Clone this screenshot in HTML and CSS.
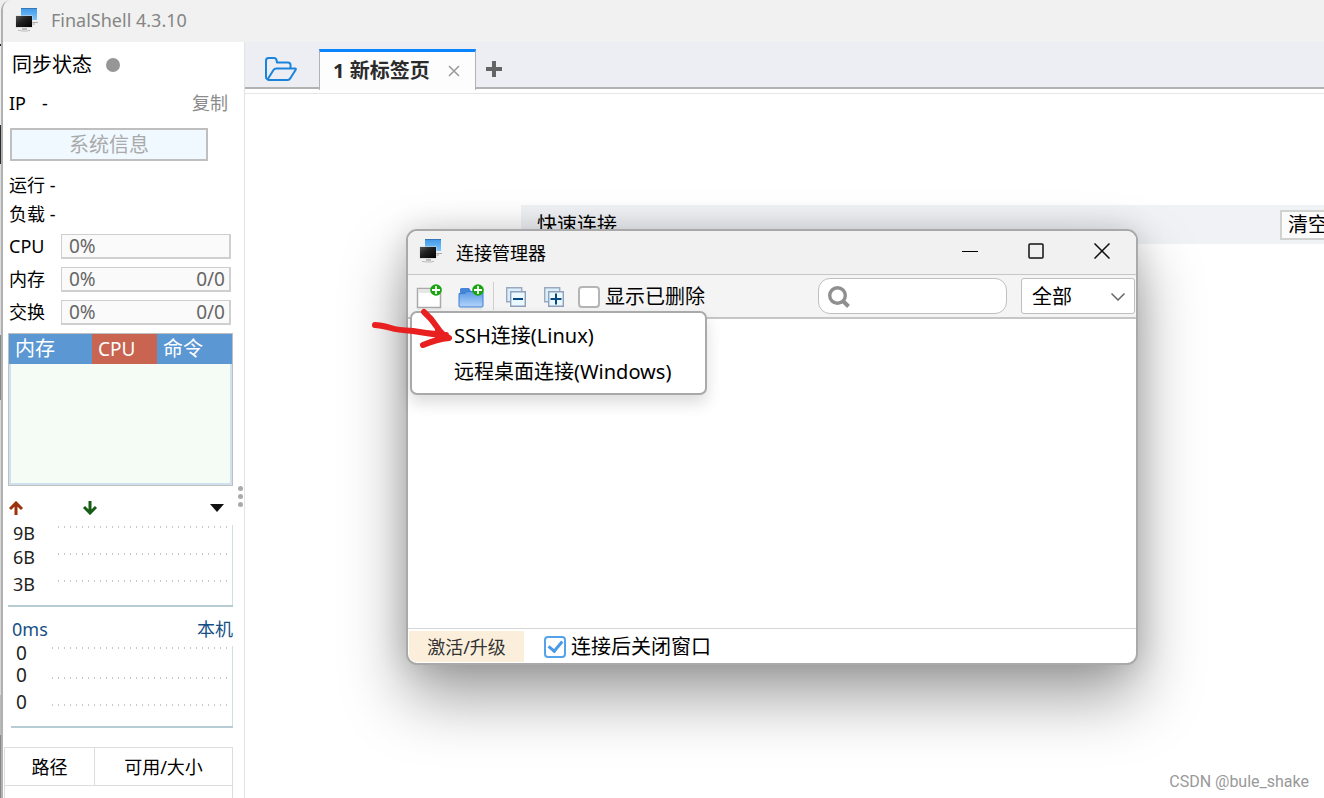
FILE: index.html
```html
<!DOCTYPE html>
<html lang="zh-CN">
<head>
<meta charset="utf-8">
<title>FinalShell 4.3.10</title>
<link rel="stylesheet" href="styles.css">
</head>
<body>
<svg class="defs" aria-hidden="true">
  <defs>
    <linearGradient id="blueScreen" x1="0" y1="0" x2="0" y2="1"><stop offset="0" stop-color="#3f97e6"/><stop offset="1" stop-color="#7cc6ff"/></linearGradient>
    <linearGradient id="darkScreen" x1="0" y1="0" x2="1" y2="1"><stop offset="0" stop-color="#555"/><stop offset=".4" stop-color="#222"/><stop offset="1" stop-color="#000"/></linearGradient>
    <linearGradient id="folderFill" x1="0" y1="0" x2="0" y2="1"><stop offset="0" stop-color="#5a9ae4"/><stop offset="1" stop-color="#b4d4fb"/></linearGradient>
    <symbol id="logo" viewBox="0 0 24 24">
      <path d="M6 0h16v12H6z" fill="url(#blueScreen)"/>
      <path d="M6 0h16v1H6z" fill="#3478b8"/>
      <path d="M17 14.500h6M17 16h3" stroke="#aaa"/>
      <path d="M.5 7.500h17v12.500H.5z" fill="#ddd"/>
      <path d="M1 8h16v11H1z" fill="url(#darkScreen)"/>
      <path d="M7 20h5v2H7zM3 22h3v1H3zM6 22.500h7v1H6zM13 22h2v1h-2z" fill="#bbb"/>
    </symbol>
    <symbol id="badge" viewBox="0 0 12 12">
      <circle cx="6" cy="6" r="5.800" fill="#18a510"/>
      <path d="M6 2v8M2 6h8" stroke="#fff" stroke-width="1.800"/>
    </symbol>
  </defs>
</svg>

<div class="desktop">
  <div class="app">
    <header class="app-title">
      <svg class="logo" aria-hidden="true"><use href="#logo"/></svg>
      <span>FinalShell 4.3.10</span>
    </header>

    <div class="app-body">
      <aside class="sidebar">
        <div class="sync">同步状态<span class="sync-dot"></span></div>
        <div class="ip"><span>IP</span><span class="ip-value">-</span><button class="copy" type="button">复制</button></div>
        <button class="sysinfo" type="button">系统信息</button>
        <div class="stat">运行 -</div>
        <div class="stat">负载 -</div>
        <div class="meters">
          <div class="meter"><span>CPU</span><div class="meter-box"><span>0%</span></div></div>
          <div class="meter"><span>内存</span><div class="meter-box"><span>0%</span><span>0/0</span></div></div>
          <div class="meter"><span>交换</span><div class="meter-box"><span>0%</span><span>0/0</span></div></div>
        </div>
        <div class="process">
          <table class="process-table">
            <thead><tr><th class="col-mem">内存</th><th class="col-cpu">CPU</th><th>命令</th></tr></thead>
          </table>
        </div>
        <div class="net-head">
          <svg class="net-icon" viewBox="0 0 14 14" aria-label="上传"><path d="M7 14V3M1 8l6-6 6 6" fill="none" stroke="#9b300b" stroke-width="3"/></svg>
          <svg class="net-icon net-down" viewBox="0 0 14 14" aria-label="下载"><path d="M7 0v11M1 6l6 6 6-6" fill="none" stroke="#165c16" stroke-width="3"/></svg>
          <svg class="net-menu" viewBox="0 0 14 8" aria-hidden="true"><path d="M0 0h14L7 8z" fill="#111"/></svg>
        </div>
        <div class="chart">
          <div class="labels"><span>9B</span><span>6B</span><span>3B</span></div>
          <div class="lines"><i></i><i></i><i></i></div>
        </div>
        <div class="ping-head"><span>0ms</span><span>本机</span></div>
        <div class="chart chart-ping">
          <div class="labels"><span>0</span><span>0</span><span>0</span></div>
          <div class="lines"><i></i><i></i><i></i></div>
        </div>
        <table class="disk">
          <thead><tr><th class="col-path">路径</th><th>可用/大小</th></tr></thead>
          <tbody><tr><td colspan="2"></td></tr></tbody>
        </table>
        <div class="grip"><i></i><i></i><i></i></div>
      </aside>

      <main class="main">
        <nav class="tabs">
          <button class="open" type="button" aria-label="打开">
            <svg viewBox="0 0 32 24" aria-hidden="true"><path d="M2.500 22.500Q1 22 1 20V3.500Q1 1 3.500 1H9q2 0 2.500 2l.5 2.500h11q2.500 0 2.500 2.500v3M2.500 22.500 8.500 13q1-1.500 3-1.500H30q1.500 0 .5 1.500l-5 8q-1 2-3 2H4q-1 0-1.500-.5z" fill="none" stroke="#1a83dc" stroke-width="2" stroke-linejoin="round"/></svg>
          </button>
          <div class="tab">
            <span>1 新标签页</span>
            <button class="tab-close" type="button" aria-label="关闭标签"><svg viewBox="0 0 12 12"><path d="M1 1l10 10M11 1 1 11" stroke="#999" stroke-width="1.500"/></svg></button>
          </div>
          <button class="tab-add" type="button" aria-label="新建标签"><svg viewBox="0 0 16 16"><path d="M8 0v16M0 8h16" stroke="#646464" stroke-width="4"/></svg></button>
        </nav>
        <section class="content">
          <div class="quick"><span>快速连接</span><button class="clear" type="button">清空</button></div>
        </section>
      </main>
    </div>
  </div>

  <section class="dialog" role="dialog" aria-labelledby="dlg-title">
    <header class="dialog-title">
      <svg class="logo" aria-hidden="true"><use href="#logo"/></svg>
      <span id="dlg-title">连接管理器</span>
      <div class="win-buttons">
        <button type="button" aria-label="最小化"><svg viewBox="0 0 16 16"><path d="M0 8.500h16" stroke="#000"/></svg></button>
        <button type="button" aria-label="最大化"><svg viewBox="0 0 16 16"><rect x="1" y="1" width="14" height="14" rx="1" fill="none" stroke="#111" stroke-width="1.500"/></svg></button>
        <button type="button" aria-label="关闭"><svg viewBox="0 0 16 16"><path d="M.5.5l15 15M15.500.5l-15 15" stroke="#111" stroke-width="1.500"/></svg></button>
      </div>
    </header>
    <div class="toolbar">
      <button class="tool" type="button" aria-label="新建连接">
        <svg viewBox="0 0 26 26"><path d="M1.500 4.500h23v19h-23z" fill="#fff" stroke="#aaa" stroke-width="1.500"/><path d="M2 5h22v4H2z" fill="#e6e6e6"/><path d="M1 25h24" stroke="#ddd"/><use href="#badge" x="14" y="0" width="12" height="12"/></svg>
      </button>
      <button class="tool" type="button" aria-label="新建文件夹">
        <svg viewBox="0 0 26 26"><path d="M2 12V5.500Q2 4 3.500 4H11l2 3h10v5z" fill="#4386d8"/><path d="M1 9.500h6l2-2h16V22q0 1-1 1H2q-1 0-1-1z" fill="url(#folderFill)" stroke="#3d7fd0"/><path d="M2 25h22" stroke="#ddd"/><use href="#badge" x="14" y="0" width="12" height="12"/></svg>
      </button>
      <span class="divider"></span>
      <button class="tool small" type="button" aria-label="全部折叠">
        <svg viewBox="0 0 20 20"><path d="M.7.7h15v14h-15z" fill="#d9f0fb" stroke="#9ba8c0" stroke-width="1.400"/><path d="M4.700 4.700h14.600v14.600H4.700z" fill="#eaf8ff" stroke="#8f9fbc" stroke-width="1.400"/><path d="M7 12h10" stroke="#084a80" stroke-width="2"/></svg>
      </button>
      <button class="tool small" type="button" aria-label="全部展开">
        <svg viewBox="0 0 20 20"><path d="M.7.7h15v14h-15z" fill="#d9f0fb" stroke="#9ba8c0" stroke-width="1.400"/><path d="M4.700 4.700h14.600v14.600H4.700z" fill="#eaf8ff" stroke="#8f9fbc" stroke-width="1.400"/><path d="M6.500 12h11M12 6.500v11" stroke="#084a80" stroke-width="2"/></svg>
      </button>
      <label class="check"><input type="checkbox">显示已删除</label>
      <div class="search">
        <svg viewBox="0 0 22 22" aria-hidden="true"><circle cx="9.500" cy="9.500" r="7.800" fill="none" stroke="#8f8f8f" stroke-width="3.400"/><path d="M15 15l5.500 5.500" stroke="#8f8f8f" stroke-width="4"/></svg>
        <input type="text" aria-label="搜索">
      </div>
      <div class="filter">
        <select aria-label="筛选"><option>全部</option></select>
        <svg viewBox="0 0 14 8" aria-hidden="true"><path d="M.5.5 7 7l6.500-6.500" fill="none" stroke="#666" stroke-width="1.500"/></svg>
      </div>
    </div>
    <div class="list"></div>
    <footer class="dialog-foot">
      <button class="upgrade" type="button">激活/升级</button>
      <label class="check"><input type="checkbox" checked>连接后关闭窗口</label>
    </footer>
    <div class="menu" role="menu">
      <button type="button" role="menuitem">SSH连接(Linux)</button>
      <button type="button" role="menuitem">远程桌面连接(Windows)</button>
    </div>
  </section>

  <svg class="arrow" viewBox="0 0 84 44" aria-hidden="true"><path d="M4 17Q14 18 20 20T42 23Q58 26 75 27M53 4Q61 11 66 19T78 30Q66 31 52 37" fill="none" stroke="#e82020" stroke-width="6" stroke-linecap="round" stroke-linejoin="round"/><path d="M64 20l14 9-14 3z" fill="#e82020"/></svg>
  <div class="watermark">CSDN @bule_shake</div>
</div>
</body>
</html>
```

FILE: styles.css
```css
* { box-sizing: border-box; }

body {
  margin: 0;
  font: 20px/24px "Noto Sans", "Noto Sans CJK SC", sans-serif;
  color: #000;
}

button, input, select {
  font: inherit;
  color: inherit;
  margin: 0;
  padding: 0;
  border: 0;
  background: none;
}

svg { display: block; }
table { border-collapse: collapse; }
th { font-weight: 400; text-align: left; }

.defs { position: absolute; width: 0; height: 0; }

.desktop {
  position: relative;
  display: flex;
  height: 100vh;
  overflow: hidden;
  padding-left: 1px;
  background: linear-gradient(#eee 0 44px, #222 44px 46px, #eee 46px 125px, #2b2b2b 125px 164px, #ddd 164px 335px, #888 335px 400px, #d8d8d8 400px 695px, #bbb 695px 735px, #888 735px);
}

.app {
  flex: 1;
  min-width: 0;
  display: flex;
  flex-direction: column;
  overflow: hidden;
  border-left: 2px solid #b1b1b1;
  border-top-left-radius: 10px;
  background: #fff;
}

.app-title {
  display: flex;
  align-items: center;
  gap: 12px;
  height: 42px;
  padding: 0 0 2px 12px;
  background: #f1f1f1;
  color: #858585;
  font-size: 18px;
}

.logo { width: 24px; height: 24px; }

.app-body { flex: 1; display: flex; min-height: 0; }

/* Sidebar */
.sidebar {
  position: relative;
  flex: none;
  width: 242px;
  padding: 11px 11px 0 5px;
  border-right: 1px solid #e3e3e3;
  font-size: 18px;
}

.sync { display: flex; align-items: center; gap: 14px; padding-left: 4px; font-size: 20px; }
.sync-dot { width: 14px; height: 14px; border-radius: 50%; background: #969696; }

.ip { display: flex; gap: 16px; margin-top: 14px; padding: 0 5px 0 1px; }
.copy { margin-left: auto; color: #8c8c8c; }

.sysinfo {
  display: block;
  width: 198px;
  height: 33px;
  margin: 13px 0 10px 2px;
  border: 2px solid #bfbfbf;
  background: #f0f9ff;
  color: #aaa;
  font-size: 20px;
  line-height: 28px;
}

.stat { padding-left: 1px; line-height: 29px; }

.meters { display: grid; gap: 8px; margin-top: 5px; }
.meter { display: grid; grid-template-columns: 52px 1fr; align-items: center; padding: 0 2px 0 1px; line-height: 25px; }
.meter-box {
  display: flex;
  justify-content: space-between;
  height: 25px;
  padding: 0 4px 0 7px;
  border: 1px solid #cfcfcf;
  border-width: 1px 2px 2px 1px;
  background: #fafafa;
  color: #666;
  font-size: 19px;
  line-height: 23px;
}

.process {
  height: 153px;
  margin-top: 8px;
  border: 1px solid #bfbfbf;
  box-shadow: inset 0 0 0 2px #cfe1ee;
  background: #f5fbf5;
}
.process-table { width: 100%; background: #5b97d3; color: #fff; }
.process-table th { padding: 0 0 0 6px; font-size: 20px; line-height: 30px; }
.process-table .col-mem { width: 83px; }
.process-table .col-cpu { width: 65px; background: #c8644f; font-size: 19px; }

.net-head { display: flex; align-items: center; height: 35px; padding: 9px 9px 0 1px; }
.net-icon { width: 14px; height: 14px; }
.net-down { margin-left: 60px; }
.net-menu { width: 14px; height: 8px; margin-left: auto; }

.chart {
  display: grid;
  grid-template-columns: 50px 1fr;
  height: 86px;
  padding-right: 5px;
  border-bottom: 2px solid #b7ccd4;
  background: linear-gradient(#cfe0e5, #cfe0e5) right bottom / 1px 80px no-repeat;
  color: #222;
}
.labels { display: grid; grid-template-rows: 24px 24px 30px; align-content: start; align-items: center; padding-left: 5px; }
.lines { display: grid; grid-template-rows: 27px 27px 27px; align-content: start; padding-top: 5px; }
.lines i { height: 2px; background: repeating-linear-gradient(90deg, #c8c8c8 0 1px, transparent 1px 6px); }

.ping-head { display: flex; justify-content: space-between; height: 35px; padding: 10px 0 0 4px; color: #164f86; }
.chart-ping { grid-template-columns: 41px 1fr; margin-left: 3px; }
.chart-ping .labels { grid-template-rows: 22px 22px 32px; font-size: 19px; line-height: 22px; }
.chart-ping .lines { grid-template-rows: 30px 27px 27px; }

.disk { width: 229px; margin: 19px 0 0 -4px; }
.disk th, .disk td { border: 1px solid #ddd; padding: 0; height: 38px; text-align: center; }
.disk .col-path { width: 90px; }

.grip { position: absolute; right: 1px; top: 444px; display: grid; gap: 3px; }
.grip i { width: 5px; height: 5px; border-radius: 50%; background: #aaa; }

/* Main area */
.main { flex: 1; min-width: 0; display: flex; flex-direction: column; }

.tabs {
  display: flex;
  height: 47px;
  box-shadow: inset 0 -2px #b2b2b2;
  background: #edeef3;
}
.open { width: 74px; padding: 6px 0 0 20px; }
.open svg { width: 32px; height: 24px; }
.tab {
  display: flex;
  align-items: center;
  gap: 18px;
  height: 41px;
  margin-top: 7px;
  padding: 0 15px 0 13px;
  border: 1px solid #b2b2b2;
  border-top: 3px solid #0a84ff;
  border-bottom: 0;
  background: #fdfdfd;
  color: #2b2b2b;
  font-weight: 700;
}
.tab-close svg { width: 12px; height: 12px; }
.tab-add { padding: 7px 10px 0; }
.tab-add svg { width: 16px; height: 16px; }

.content { flex: 1; margin-top: 4px; border-top: 1px solid #e6e6e6; overflow: hidden; }
.quick {
  display: flex;
  align-items: center;
  justify-content: space-between;
  height: 39px;
  margin: 111px -16px 0 276px;
  padding: 0 4px 0 16px;
  background: #f1f2f6;
}
.clear { height: 30px; padding: 0 6px; border: 2px solid #d0d2d0; background: #fbfbfb; }

/* Connection manager window */
.dialog {
  position: absolute;
  left: 406px;
  top: 229px;
  width: 732px;
  height: 436px;
  display: flex;
  flex-direction: column;
  border: 2px solid #a9a9a9;
  border-radius: 11px;
  background: #fff;
  box-shadow: 0 32px 64px rgba(0, 0, 0, .38), 0 0 30px rgba(0, 0, 0, .14);
}

.dialog-title {
  display: flex;
  align-items: center;
  gap: 13px;
  height: 44px;
  padding-left: 11px;
  border-bottom: 1px solid #c6c6c6;
  border-radius: 9px 9px 0 0;
  background: #f1f1f1;
  font-size: 18px;
}
.dialog-title .logo { margin-bottom: 4px; }
.win-buttons { display: flex; gap: 50px; margin-left: auto; padding: 0 26px 4px 0; }
.win-buttons svg { width: 16px; height: 16px; }

.toolbar {
  display: flex;
  align-items: center;
  height: 44px;
  padding: 0 1px 0 8px;
  border-bottom: 2px solid #c6c6c6;
  background: #f4f4f4;
}
.tool { margin-right: 16px; padding-top: 2px; }
.tool svg { width: 26px; height: 26px; }
.tool.small { margin-right: 18px; }
.tool.small svg { width: 20px; height: 20px; }
.divider { width: 1px; height: 28px; margin: 0 12px 0 -7px; background: #d0d0d0; }

.check { display: flex; align-items: center; gap: 5px; }
.check input {
  appearance: none;
  width: 22px;
  height: 22px;
  border: 2px solid #b5b5b5;
  border-radius: 4px;
  background: #fff;
}
.toolbar .check { margin-left: -4px; padding-top: 2px; }
.check input:checked { display: grid; place-items: center; border-color: #54a3ea; }
.check input:checked::before {
  content: "";
  width: 6px;
  height: 11px;
  margin-bottom: 4px;
  border: solid #4a9ae6;
  border-width: 0 3px 3px 0;
  transform: rotate(40deg);
}

.search {
  display: flex;
  align-items: center;
  gap: 6px;
  width: 189px;
  height: 36px;
  margin: 0 14px 0 auto;
  padding: 2px 10px 0 9px;
  border: 1px solid #bfbfbf;
  border-radius: 12px;
  background: #fff;
}
.search svg { flex: none; width: 22px; height: 22px; }
.search input { flex: 1; min-width: 0; outline: 0; }

.filter { position: relative; width: 114px; height: 36px; }
.filter select {
  appearance: none;
  width: 100%;
  height: 100%;
  padding: 2px 0 0 10px;
  border: 1px solid #bfbfbf;
  border-radius: 3px;
  background: #fff;
}
.filter svg { position: absolute; right: 10px; top: 15px; width: 14px; height: 8px; pointer-events: none; }

.list { flex: 1; }

.dialog-foot {
  display: flex;
  gap: 20px;
  height: 35px;
  padding: 2px 0 1px 1px;
  border-top: 1px solid #d6d6d6;
}
.upgrade { width: 115px; border-bottom-left-radius: 8px; background: #fbefdc; color: #333; font-size: 18px; }

.menu {
  position: absolute;
  left: 2px;
  top: 80px;
  width: 297px;
  padding: 5px 0 3px;
  border: 2px solid #a9a9a9;
  border-radius: 7px;
  background: #fff;
  box-shadow: 0 8px 16px rgba(0, 0, 0, .14);
}
.menu button { display: block; width: 100%; height: 36px; padding-left: 42px; text-align: left; }

.arrow { position: absolute; left: 371px; top: 308px; width: 84px; height: 44px; }

.watermark {
  position: absolute;
  right: 15px;
  bottom: 4px;
  color: #999;
  font: 16px/24px Roboto, sans-serif;
}
```
